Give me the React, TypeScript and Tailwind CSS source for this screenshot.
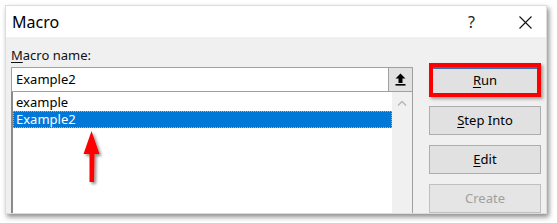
import React from "react";

const font = { fontFamily: '"Noto Sans", "Segoe UI", "Liberation Sans", sans-serif' };

function Btn({ children, disabled }: { children: React.ReactNode; disabled?: boolean }) {
  return (
    <div
      className={`h-[29px] w-[112px] flex items-center justify-center border border-[#adadad] bg-[#e1e1e1] text-[13px] ${
        disabled ? "text-[#a0a0a0] border-[#bfbfbf] bg-[#e5e5e5]" : "text-black"
      }`}
    >
      {children}
    </div>
  );
}

export default function App() {
  return (
    <div className="w-[557px] h-[223px] bg-white pl-[5px] pt-[5px] overflow-hidden" style={font}>
      <div className="relative w-[542px] h-[209px] flex flex-col bg-[#f0f0f0] border border-[#dcdcdc] shadow-[2px_3px_5px_rgba(0,0,0,0.45)] overflow-hidden">
        {/* Title bar */}
        <div className="h-[31px] bg-white flex items-center pl-[6px] pr-[14px] shrink-0">
          <span className="text-[16px] text-black leading-none">Macro</span>
          <span className="ml-auto text-[16px] text-[#222] leading-none mr-[44px]">?</span>
          <svg width="13" height="13" viewBox="0 0 13 13" className="mt-[1px]">
            <path d="M0.5 0.5 L12.5 12.5 M12.5 0.5 L0.5 12.5" stroke="#111" strokeWidth="1.1" />
          </svg>
        </div>
        {/* Body */}
        <div className="flex flex-1 pl-[5px]">
          {/* Left column */}
          <div className="w-[402px] flex flex-col">
            <div className="mt-[9px] h-[18px] text-[13px] leading-[18px] text-[#111]">
              <span className="underline underline-offset-2">M</span>acro name:
            </div>
            <div className="mt-[3px] h-[25px] flex bg-white border border-[#a0a0a0]">
              <div className="flex-1 pl-[4px] text-[13px] leading-[23px] text-black">Example2</div>
              <div className="w-[24px] h-[23px] bg-[#e1e1e1] border-l border-[#a0a0a0] flex items-center justify-center">
                <svg width="11" height="13" viewBox="0 0 11 13">
                  <path d="M5.5 0.5 L10.5 5.5 L7.5 5.5 L7.5 10 L3.5 10 L3.5 5.5 L0.5 5.5 Z" fill="#000" />
                  <rect x="0.5" y="11" width="10" height="1.6" fill="#000" />
                </svg>
              </div>
            </div>
            <div className="flex-1 flex bg-white border-l-2 border-l-[#8a8a8a] border-r border-r-[#a0a0a0]">
              <div className="flex-1 pt-[2px] text-[13px]">
                <div className="h-[17px] leading-[16px] pl-[3px] text-black">example</div>
                <div className="h-[17px] leading-[15px] pl-[2px] bg-[#0078d7] text-white border border-dotted border-[#f0a050]">
                  Example2
                </div>
              </div>
              <div className="w-[20px] bg-[#f0f0f0] flex justify-center pt-[8px]">
                <svg width="10" height="6" viewBox="0 0 10 6">
                  <path d="M1 5.5 L5 1.5 L9 5.5" stroke="#b8b8b8" strokeWidth="1.5" fill="none" />
                </svg>
              </div>
            </div>
          </div>
          {/* Right column */}
          <div className="ml-[16px] w-[112px] flex flex-col">
            <div className="mt-[26px] h-[34px] border-[4px] border-[#ff0000] bg-[#e1e1e1] shadow-[2px_2px_3px_rgba(0,0,0,0.35)] flex flex-col">
              <div className="h-[2px] bg-[#3d6eb5]" />
              <div className="flex-1 flex items-center justify-center text-[13px] text-black">
                <span><span className="underline underline-offset-2">R</span>un</span>
              </div>
            </div>
            <div className="mt-[9px]">
              <Btn>
                <span><span className="underline underline-offset-2">S</span>tep Into</span>
              </Btn>
            </div>
            <div className="mt-[10px]">
              <Btn>
                <span><span className="underline underline-offset-2">E</span>dit</span>
              </Btn>
            </div>
            <div className="mt-[10px]">
              <Btn disabled>Create</Btn>
            </div>
          </div>
        </div>
        {/* Red arrow annotation */}
        <svg className="absolute left-[74px] top-[123px]" width="30" height="62" viewBox="0 0 30 62">
          <defs>
            <filter id="sh" x="-50%" y="-50%" width="200%" height="200%">
              <feDropShadow dx="2" dy="2" stdDeviation="1.5" floodColor="#000" floodOpacity="0.45" />
            </filter>
          </defs>
          <path
            d="M11.5 2 L19.5 25 L14.5 25 L14 53 L9.5 53 L9.5 25 L3.5 25 Z"
            fill="#ff0000"
            filter="url(#sh)"
          />
        </svg>
      </div>
    </div>
  );
}
